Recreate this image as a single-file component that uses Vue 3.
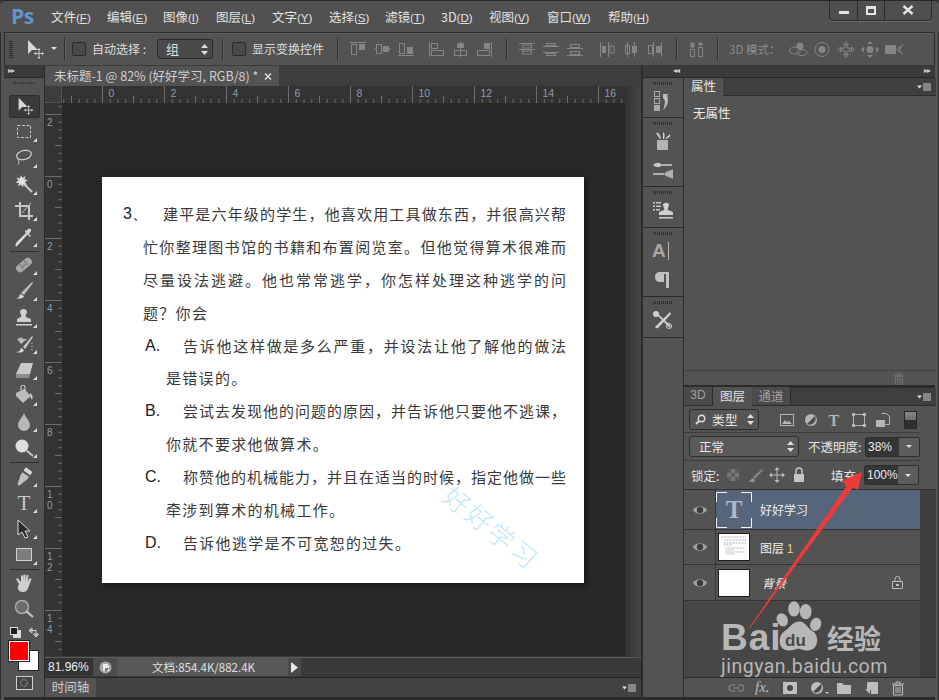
<script setup>
const menus = [
  ['文件', 'F', 51, 39], ['编辑', 'E', 107, 39], ['图像', 'I', 163, 36], ['图层', 'L', 216, 39],
  ['文字', 'Y', 272, 40], ['选择', 'S', 329, 39], ['滤镜', 'T', 385, 39], ['3D', 'D', 441, 31],
  ['视图', 'V', 489, 41], ['窗口', 'W', 547, 44], ['帮助', 'H', 608, 42]
]
const s = 'fill="none" stroke="#858585" stroke-width="1"'
const f = 'fill="#858585"'
const alignIcons = [
  [`<path d="M1 1.5h16" ${s}/><rect x="2.5" y="3.5" width="5" height="10" ${s}/><rect x="10" y="3" width="6" height="6" ${f}/>`,
   `<path d="M1 8h3M9 8h2M16 8h2" ${s}/><rect x="3.5" y="3.5" width="5" height="9" ${s}/><rect x="10" y="5" width="6" height="6" ${f}/>`,
   `<path d="M1 14.5h16" ${s}/><rect x="2.5" y="2.5" width="5" height="10" ${s}/><rect x="10" y="6" width="6" height="7" ${f}/>`],
  [`<path d="M1.5 1v15" ${s}/><rect x="3.5" y="2.5" width="6" height="5" ${s}/><rect x="3.5" y="9.5" width="12" height="5" ${s}/>`,
   `<path d="M8.5 0v16" ${s}/><rect x="5" y="2" width="7" height="5" ${f}/><rect x="2.5" y="9.5" width="12" height="5" ${s}/>`,
   `<path d="M15.5 1v15" ${s}/><rect x="8" y="2" width="6" height="6" ${f}/><rect x="1.5" y="9.5" width="12" height="5" ${s}/>`]
]
const distIcons = [
  [`<path d="M1 2.5h16M1 8.5h16" ${s}/><rect x="4.5" y="4" width="9" height="3" ${s}/><rect x="4.5" y="10" width="9" height="3" ${s}/>`,
   `<path d="M1 5.5h16M1 11.5h16" ${s}/><rect x="4.5" y="2.5" width="9" height="2" ${s}/><rect x="4.5" y="12.5" width="9" height="2" ${s}/>`,
   `<path d="M1 7.5h16M1 14.5h16" ${s}/><rect x="4.5" y="3.5" width="9" height="3" ${s}/><rect x="4.5" y="10.5" width="9" height="3" ${s}/>`],
  [`<path d="M2.5 1v15M10.5 1v15" ${s}/><rect x="4" y="5" width="4" height="7" ${f}/><rect x="12" y="5" width="4" height="7" ${s}/>`,
   `<path d="M5.5 1v15M12.5 1v15" ${s}/><rect x="3.5" y="4.5" width="4" height="8" ${s}/><rect x="10" y="5" width="5" height="7" ${f}/>`,
   `<path d="M7.5 1v15M15.5 1v15" ${s}/><rect x="2.5" y="4.5" width="4" height="8" ${s}/><rect x="10" y="5" width="5" height="7" ${f}/>`]
]
const autoAlign = `<rect x="2.5" y="1.5" width="4" height="5" ${f}/><rect x="2.5" y="8.5" width="4" height="7" ${s}/><rect x="10.5" y="1.5" width="4" height="3" ${f}/><rect x="10.5" y="6.5" width="4" height="9" ${s}/>`
const threeD = [
  `<ellipse cx="6" cy="9.500" rx="5.500" ry="3.500" ${s}/><ellipse cx="13" cy="11.500" rx="5" ry="3" ${s}/><circle cx="11" cy="5" r="3.500" ${f}/>`,
  `<circle cx="9" cy="8.500" r="7" ${s} stroke-width="2"/><circle cx="9" cy="8.500" r="3.500" ${f}/>`,
  `<path d="M9 .5l2.500 3h-5zM9 16.500l2.500-3h-5zM.5 8.500l3-2.500v5zM17.500 8.500l-3-2.500v5z" ${s}/><path d="M8 4h2v3h3v3h-3v3H8v-3H5V7h3z" ${s}/>`,
  `<path d="M9 0l3 3H6zM9 17l3-3H6zM0 8.500l3-3v6zM18 8.500l-3-3v6z" ${f}/><circle cx="9" cy="8.500" r="3.500" ${f}/>`,
  `<rect x="0" y="4" width="11" height="9" rx="1" ${f}/><path d="M12 8.500l3-3v6zM18 3l-4 5.500 4 5.500" ${s}/>`
]
const w = '#c6c6c6'
const l = `fill="none" stroke="${w}"`
const moveIcon = `<path d="M4 2v14l4-4h6z" fill="#d8d8d8"/><path d="M15 11v9M10.500 15.500h9" ${l}/><path d="M15 10l1.500 2h-3zM15 21l1.500-2h-3zM10 15.500l2-1.500v3zM20 15.500l-2-1.500v3z" fill="#d8d8d8"/>`
const tools = [
  [{ i: moveIcon, sel: 1 },
   { i: `<rect x="4.500" y="4.500" width="13" height="12" ${l} stroke-dasharray="3 1.500"/>`, m: 1 },
   { i: `<ellipse cx="11" cy="8" rx="7.500" ry="4.500" ${l} stroke-width="1.300" transform="rotate(-15 11 8)"/><path d="M5 11c-1 2 1 2 1 4s-1 2-1 3" ${l}/>`, m: 1 },
   { i: `<path d="M11 11l8 8" stroke="${w}" stroke-width="2.200"/><path d="M8 2l1.500 3 3-2-1 3.500 3.500.500-3 2 2 3-3.500-1-.500 3.500-2-3-3 2 1-3.500-3.500-.500 3-2-2-3 3.500 1z" fill="#e0e0e0"/>`, m: 1 },
   { i: `<path d="M7 2v14h13M2 6h14v14" fill="none" stroke="${w}" stroke-width="2"/><path d="M9 13l9-10" stroke="${w}"/>`, m: 1 },
   { i: `<path d="M14 8L5 18l-1.500 1.500L3 19l1-2 9-9z" fill="none" stroke="#ddd" stroke-width="1.300"/><path d="M12 6l5 5 1-1-2-2 2-3c1-2-1-3.500-3-2l-2 2-1-1z" fill="#d0d0d0"/>`, m: 1 }],
  [{ i: `<g transform="rotate(-40 11 11)"><rect x="2" y="7" width="18" height="8" rx="4" fill="#a8a8a8"/><path d="M8 8v6M14 8v6M9 11h4" stroke="#6c6c6c" stroke-width="2" stroke-dasharray="1 1"/></g>`, m: 1 },
   { i: `<path d="M8 13L19 2l1 1-9 12z" fill="#bdbdbd"/><path d="M3 18c3 0 3-1 4-4l4 2c-1 3-5 3-8 2z" fill="#d8d8d8"/>`, m: 1 },
   { i: `<path d="M8 11c1-2-1-3-1-5 0-4 7-4 7 0 0 2-2 3-1 5 1 1 5 1 5 3v2H4v-2c0-2 3-2 4-3z" fill="#d0d0d0"/><path d="M3 18h16v1.500H3z" fill="#d0d0d0"/>`, m: 1 },
   { i: `<path d="M4 6l6-2-1 2h5l-6 5z" fill="#bdbdbd"/><path d="M10 14L19 3l1 1-8 12z" fill="#c8c8c8"/><path d="M3 19c3 0 4-1 5-4l3 2c-1 3-5 3-8 2z" fill="#d8d8d8"/><path d="M19 10v8" stroke="#ddd" stroke-dasharray="1 2"/>`, m: 1 },
   { i: `<path d="M8 4h12l-3 11H3z" fill="#c8c8c8"/><path d="M3 15h14l-1 4H3z" fill="#8d8d8d"/>`, m: 1 },
   { i: `<path d="M3 8l8-4 7 7-8 7-7-7z" fill="#bcbcbc"/><path d="M8 5V2a2 2 0 0 1 4 0v4" fill="none" stroke="#ddd"/><path d="M17 8c3 2 3 5 2 7-1-2-2-3-2-7z" fill="#ccc"/>`, m: 1 },
   { i: `<path d="M11 2c2 5 6 8 6 12a6 6 0 0 1-12 0c0-4 4-7 6-12z" fill="#b8b8b8"/>`, m: 1 },
   { i: `<circle cx="9" cy="9" r="6.500" fill="#dedede"/><path d="M13 13l7 6" stroke="${w}" stroke-width="2"/>`, m: 1 }],
  [{ i: `<g transform="rotate(35 11 11)"><path d="M7 8h8v3l-3 10h-2L7 11z" fill="#c0c0c0"/><rect x="7" y="2" width="8" height="4" fill="#d8d8d8"/></g>`, m: 1 },
   { t: 'T', m: 1 },
   { i: `<path d="M5 2v15l4-3 3 6 3-1-3-6h5z" fill="#2a2a2a" stroke="#d8d8d8"/>`, m: 1 },
   { i: `<rect x="3.500" y="4.500" width="15" height="12" fill="#7d7d7d" stroke="#d0d0d0"/>`, m: 1 }],
  [{ i: `<path d="M6 12L3 7l1.500-1L8 10V3.500h2V9l.5-6.500h2V9l1-6h2l-1 7 2-4 2 1-3 8c-1 4-3 5-6 5s-4-2-5-4z" fill="#cfcfcf"/>` },
   { i: `<circle cx="9" cy="9" r="6.500" fill="#6c6c6c" stroke="#aaa" stroke-width="1.500"/><path d="M13 13l7 6" stroke="${w}" stroke-width="2.200"/>` }]
]
const dock = [
  { h: 40, ic: [`<rect x="3.500" y="1.500" width="5" height="5" fill="none" stroke="#aaa"/><rect x="3.500" y="8.500" width="5" height="5" fill="none" stroke="#aaa"/><rect x="3" y="15" width="6" height="6" fill="#aaa"/><path d="M12 4h6l-2 1c2 5 1 11-4 15 2-5 3-10 0-12z" fill="#bbb"/>`] },
  { h: 69, ic: [`<path d="M6 10h11v10H6z" fill="#b4b4b4"/><path d="M9 9L5 3c2-1 4 1 5 6zM12 9V2c2 1 2 4 1 7zM14 9l5-5c1 2-1 4-4 5z" fill="#cfcfcf"/>`,
   `<path d="M2 6c3-3 7-3 9 0-2 3-6 3-9 0z" fill="#c4c4c4"/><path d="M11 6h10" stroke="#ccc" stroke-width="1.500"/><path d="M2 15h11" stroke="#ccc" stroke-width="1.500"/><path d="M13 15c3-4 7-3 9-5v10c-2-2-6-1-9-5z" fill="#b0b0b0"/>`] },
  { h: 41, ic: [`<path d="M2 3h2v1.500H2zm3 0h5v1.500H5zM2 6.500h2V8H2zm3 0h5V8H5zM2 10h2v1.500H2zm3 0h4v1.500H5z" fill="#c8c8c8"/><path d="M13 11c1-2-1-3-1-5 0-3 6-3 6 0 0 2-2 3-1 5 1 1 5 1 5 3v2H8v-2c0-2 4-2 5-3z" fill="#cfcfcf"/><path d="M8 18h14v1.500H8z" fill="#cfcfcf"/>`] },
  { h: 69, ic: [`<text x="1" y="17" font-family="Liberation Sans" font-size="19" font-weight="bold" fill="#a8a8a8">A</text><path d="M17.500 2v18" stroke="#b8b8b8"/>`,
   `<path d="M9 3h9v16h-3V5h-2v8H9.500C6 13 4 11 4 8s2-5 5-5z" fill="#c0c0c0"/>`] },
  { h: 41, ic: [`<path d="M3 3l15 15 2 1-1-3L5 3zM19 3L4 18c1 1.500 2 1.500 3 1L20 5z" fill="#cfcfcf"/><circle cx="5" cy="5" r="3" fill="#cfcfcf"/><circle cx="18" cy="17" r="2.500" fill="none" stroke="#cfcfcf"/>`] }
]
const menuIcon = `<path d="M0 2.500h5L2.500 5.500z" fill="#ddd"/><path d="M6 1h8M6 3h8M6 5h8M6 7h8" stroke="#ccc" stroke-width="1"/>`
const filterIcons = [
  `<rect x="1.500" y="2.500" width="13" height="11" fill="none" stroke="#b5b5b5"/><path d="M3 12l3-4 2 2 2-1 3 3z" fill="#b5b5b5"/>`,
  `<circle cx="8" cy="8" r="6" fill="#b5b5b5"/><path d="M12 4a6 6 0 0 1-8 8z" fill="#4a4a4a"/>`,
  `<text x="1.500" y="14" font-family="Liberation Serif" font-weight="bold" font-size="16" fill="#b5b5b5">T</text>`,
  `<rect x="2.500" y="2.500" width="11" height="11" fill="none" stroke="#b5b5b5"/><path d="M1 1h3v3H1zM12 1h3v3h-3zM1 12h3v3H1zM12 12h3v3h-3z" fill="#b5b5b5"/>`,
  `<path d="M6.500 1.500h5l3 3v8h-4" fill="none" stroke="#b5b5b5"/><rect x="1" y="8" width="9" height="7" fill="#b5b5b5"/>`
]
const lockIcons = [
  `<path d="M2 2h12v12H2z" fill="#777"/><path d="M2 2h4v4H2zM10 2h4v4h-4zM6 6h4v4H6zM2 10h4v4H2zM10 10h4v4h-4z" fill="#5c5c5c"/>`,
  `<path d="M6 10L15 2l1 1-8 9z" fill="#858585"/><path d="M1 14c3 0 3-1 4-3l3 2c-1 3-4 2-7 1z" fill="#9a9a9a"/>`,
  `<path d="M8 1v14M1 8h14" stroke="#bbb"/><path d="M8 0l2.500 3h-5zM8 16l2.500-3h-5zM0 8l3-2.500v5zM16 8l-3-2.500v5z" fill="#bbb"/>`,
  `<rect x="3" y="7" width="10" height="8" fill="#c4c4c4"/><path d="M5 7V4a3 3 0 0 1 6 0v3" fill="none" stroke="#c4c4c4" stroke-width="1.500"/>`
]
const trash = `<path d="M2 4h12M6 4V2h4v2M3.500 5.500h9V15h-9zM6 7v6M8 7v6M10 7v6" fill="none" stroke="#bdbdbd"/>`
const trashDim = trash.replace('#bdbdbd', '#777')
const bottomIcons = [
  { i: `<path d="M7 5H4a3 3 0 0 0 0 6h3M10 5h3a3 3 0 0 1 0 6h-3M5 8h7" fill="none" stroke="#7c7c7c" stroke-width="1.500"/>` },
  { fx: 1 },
  { i: `<rect x="1" y="2" width="14" height="12" fill="#bdbdbd"/><circle cx="8" cy="8" r="3" fill="#4a4a4a"/>` },
  { i: `<circle cx="8" cy="8" r="6" fill="#bdbdbd"/><path d="M12 4a6 6 0 0 1-8 8z" fill="#4a4a4a"/>`, m: 1 },
  { i: `<path d="M1 3h5l2 2h7v9H1z" fill="#bdbdbd"/>` },
  { i: `<path d="M5 2h10v12H8v-4H4V3z" fill="#bdbdbd"/><path d="M2 9h5v5z" fill="#bdbdbd"/>` },
  { i: trash }
]
const eye = `<path d="M1 7c3-5 11-5 14 0-3 5-11 5-14 0z" fill="#a4a4a4"/><circle cx="8" cy="7" r="3.200" fill="#3e3e3e"/>`

const hTicks = []
for (let i = -5; i * 7.75 + 40 < 563; i++) hTicks.push({ x: 40.5 + i * 7.75, k: ((i % 8) + 8) % 8 })
const hLabels = [0, 2, 4, 6, 8, 10, 12, 14, 16]
const vTicks = []
for (let i = -9; i * 7.75 + 74 < 553; i++) vTicks.push({ y: 73.5 + i * 7.75, k: ((i % 8) + 8) % 8 })
const vLabels = [['2', -2], ['0', 0], ['2', 2], ['4', 4], ['6', 6], ['8', 8], ['1', 10, '0'], ['1', 12, '2'], ['1', 14, '4']]
const tk = k => (k === 0 ? 17 : k === 4 ? 7 : 4)

const lines = [
  { m: '3、', mw: 40, ind: 21, t: '建平是六年级的学生，他喜欢用工具做东西，并很高兴帮', j: 1 },
  { ind: 41, t: '忙你整理图书馆的书籍和布置阅览室。但他觉得算术很难而', j: 1 },
  { ind: 41, t: '尽量设法逃避。他也常常逃学，你怎样处理这种逃学的问', j: 1 },
  { ind: 41, t: '题？你会' },
  { m: 'A.', mw: 38, ind: 43, t: '告诉他这样做是多么严重，并设法让他了解他的做法', j: 1 },
  { ind: 64, t: '是错误的。' },
  { m: 'B.', mw: 38, ind: 43, t: '尝试去发现他的问题的原因，并告诉他只要他不逃课，', j: 1 },
  { ind: 64, t: '你就不要求他做算术。' },
  { m: 'C.', mw: 38, ind: 43, t: '称赞他的机械能力，并且在适当的时候，指定他做一些', j: 1 },
  { ind: 64, t: '牵涉到算术的机械工作。' },
  { m: 'D.', mw: 38, ind: 43, t: '告诉他逃学是不可宽恕的过失。' }
]
</script>

<template>
  <div class="win">
    <header class="title">
      <span class="logo">Ps</span>
      <nav class="menu">
        <span v-for="m in menus" :key="m[1]" class="mi" :style="{ width: m[3] + 'px', left: m[2] + 'px' }">{{ m[0] }}<small>(<u>{{ m[1] }}</u>)</small></span>
      </nav>
      <div class="wc">
        <span class="wb w1"><i class="min"></i></span>
        <span class="wb w2"><i class="max"></i></span>
        <span class="wb w3"><svg width="12" height="10" viewBox="0 0 12 10"><path d="M1.500 1l9 8M10.500 1l-9 8" stroke="#e4e4e4" stroke-width="2.400"/></svg></span>
      </div>
    </header>

    <section class="opts">
      <i class="grip"></i>
      <svg class="mv" width="22" height="22" viewBox="0 0 22 22" v-html="moveIcon"></svg>
      <i class="caret"></i>
      <i class="sep s1"></i>
      <i class="chk c1"></i>
      <span class="olab l1">自动选择 :</span>
      <span class="osel">组<svg width="7" height="11" viewBox="0 0 7 11"><path d="M3.500 0L7 4H0zM3.500 11L0 7h7z" fill="#ddd"/></svg></span>
      <i class="sep s2"></i>
      <i class="chk c2"></i>
      <span class="olab">显示变换控件</span>
      <i class="sep s3"></i>
      <svg v-for="(ic, n) in alignIcons[0]" :key="'a' + n" class="oi" :class="{ first: n === 0 }" width="24" height="16" viewBox="-3 0 24 16" v-html="ic"></svg>
      <svg v-for="(ic, n) in alignIcons[1]" :key="'b' + n" class="oi" :class="{ g7: n === 0 }" width="24" height="16" viewBox="-3 0 24 16" v-html="ic"></svg>
      <i class="sep s4"></i>
      <svg v-for="(ic, n) in distIcons[0]" :key="'c' + n" class="oi" :class="{ g8: n === 0 }" width="24" height="16" viewBox="-3 0 24 16" v-html="ic"></svg>
      <svg v-for="(ic, n) in distIcons[1]" :key="'d' + n" class="oi" :class="{ g8: n === 0 }" width="24" height="16" viewBox="-3 0 24 16" v-html="ic"></svg>
      <i class="sep s5"></i>
      <svg class="oi g8" width="24" height="16" viewBox="-3 0 24 16" v-html="autoAlign"></svg>
      <i class="sep s5b"></i>
      <span class="o3d">3D 模式：</span>
      <svg v-for="(ic, n) in threeD" :key="'e' + n" class="oi" width="24" height="17" viewBox="-3 0 24 17" v-html="ic"></svg>
    </section>

    <main class="body">
      <aside class="toolbox">
        <div class="strip"><span class="dbl">▸▸</span></div>
        <div class="tlist">
          <i class="tgrip"></i>
          <template v-for="(grp, gi) in tools" :key="gi">
            <i v-if="gi" class="tsep"></i>
            <div v-for="(t, ti) in grp" :key="ti" class="tool" :class="{ sel: t.sel, more: t.m }">
              <span v-if="t.t" class="tT">T</span>
              <svg v-else width="22" height="22" viewBox="0 0 22 22" v-html="t.i"></svg>
            </div>
          </template>
          <div class="swatch">
            <div class="swaps">
              <svg width="11" height="11" viewBox="0 0 11 11"><rect x="3" y="3" width="8" height="8" fill="#dcdcdc"/><rect x="0.500" y="0.500" width="7" height="7" fill="#1e1e1e" stroke="#ddd"/></svg>
              <svg width="11" height="12" viewBox="0 0 11 12"><path d="M1 3.500h7v6M1 3.500l3-2.500v5zM8 10l-2.500-3h5z" fill="none" stroke="#dcdcdc"/></svg>
            </div>
            <div class="colors"><i class="bgc"></i><i class="fgc"></i></div>
            <div class="qm"><svg width="16" height="12" viewBox="0 0 16 12"><circle cx="8" cy="6" r="4.500" fill="none" stroke="#e8e8e8" stroke-dasharray="1 1"/></svg></div>
          </div>
        </div>
      </aside>

      <section class="doc">
        <div class="tabs"><div class="tab">未标题-1 @ 82% (好好学习, RGB/8) *<svg width="8" height="7" viewBox="0 0 8 7"><path d="M1 .5l6 6M7 .5l-6 6" stroke="#d4d4d4" stroke-width="1.600"/></svg></div></div>
        <div class="work">
          <div class="rulers">
            <div class="corner"></div>
            <svg class="hr" width="563" height="17">
              <path v-for="(t, i) in hTicks" :key="i" :d="`M${t.x} 17v-${tk(t.k)}`" stroke="#6c6c6c"/>
              <text v-for="n in hLabels" :key="n" :x="46.500 + n * 31" y="11" class="rl">{{ n }}</text>
            </svg>
            <svg class="vr" width="17" height="553">
              <path v-for="(t, i) in vTicks" :key="i" :d="`M${17 - tk(t.k)} ${t.y}h${tk(t.k)}`" stroke="#6c6c6c"/>
              <template v-for="v in vLabels" :key="v[1]">
                <text x="2" :y="v[1] * 31 + 84.500" class="rl rv">{{ v[0] }}</text>
                <text v-if="v[2]" x="2" :y="v[1] * 31 + 96" class="rl rv">{{ v[2] }}</text>
              </template>
            </svg>
            <div class="canvas">
              <article class="page">
                <div v-for="(ln, i) in lines" :key="i" class="ln" :style="{ paddingLeft: ln.ind + 'px' }">
                  <span v-if="ln.m" class="mk" :style="{ width: ln.mw + 'px' }">{{ ln.m }}</span>
                  <span class="tx" :class="{ just: ln.j }">{{ ln.t }}</span>
                </div>
                <span class="wm">好好学习</span>
              </article>
            </div>
          </div>
          <div class="vscroll"></div>
        </div>
        <div class="status">
          <span class="zoom">81.96%</span>
          <span class="st-ic"><svg width="13" height="13" viewBox="0 0 13 13"><circle cx="6.500" cy="6.500" r="6" fill="#a8a8a8"/><path d="M4 3h4l2 2v5H4z" fill="#eee"/><path d="M6 7h4l-2 3H6z" fill="#777"/></svg></span>
          <span class="st-info">文档:854.4K/882.4K</span>
          <span class="st-arrow"><svg width="7" height="11" viewBox="0 0 7 11"><path d="M0 0l7 5.500L0 11z" fill="#e8e8e8"/></svg></span>
          <span class="st-rest"></span>
        </div>
        <div class="timeline">
          <span class="tltab">时间轴</span>
          <svg class="pm" width="15" height="8" viewBox="0 0 15 8" v-html="menuIcon"></svg>
        </div>
      </section>

      <aside class="dock">
        <div class="strip dstrip"><span class="dbl">◂◂</span><span class="dbl dr">▸▸</span></div>
        <div v-for="(g, gi) in dock" :key="gi" class="dgroup" :style="{ height: g.h + 'px' }">
          <i class="dgrip"></i>
          <svg v-for="(ic, n) in g.ic" :key="n" class="dic" width="24" height="22" viewBox="0 0 24 22" v-html="ic"></svg>
        </div>
        <div class="dgroup fill"></div>
      </aside>

      <aside class="panels">
        <div class="pnl props">
          <div class="ptabs">
            <span class="ptab on">属性</span>
            <svg class="pm" width="15" height="8" viewBox="0 0 15 8" v-html="menuIcon"></svg>
          </div>
          <div class="nop">无属性</div>
          <div class="pfoot"><svg width="14" height="13" viewBox="0 0 16 16" v-html="trashDim"></svg></div>
        </div>
        <div class="pnl layers">
          <div class="ptabs ltabs">
            <span class="ptab off t3d">3D</span>
            <span class="ptab on">图层</span>
            <span class="ptab off">通道</span>
            <svg class="pm" width="15" height="8" viewBox="0 0 15 8" v-html="menuIcon"></svg>
          </div>
          <div class="row r1">
            <span class="sel s-filter">
              <svg width="11" height="11" viewBox="0 0 11 11"><circle cx="6.500" cy="4.500" r="3.200" fill="none" stroke="#ddd" stroke-width="1.400"/><path d="M4 7L1 10" stroke="#ddd" stroke-width="1.800"/></svg>
              <b>类型</b>
              <svg class="ud" width="7" height="11" viewBox="0 0 7 11"><path d="M3.500 0L7 4H0zM3.500 11L0 7h7z" fill="#ddd"/></svg>
            </span>
            <div class="ficons"><svg v-for="(ic, n) in filterIcons" :key="n" width="16" height="16" viewBox="0 0 16 16" v-html="ic"></svg></div>
            <span class="toggle"><i></i></span>
          </div>
          <div class="row r2">
            <span class="sel s-blend"><b>正常</b><svg class="ud" width="7" height="11" viewBox="0 0 7 11"><path d="M3.500 0L7 4H0zM3.500 11L0 7h7z" fill="#ddd"/></svg></span>
            <span class="lab op">不透明度:</span>
            <span class="field"><em>38%</em><i><u></u></i></span>
          </div>
          <div class="row r3">
            <span class="lab lk">锁定:</span>
            <div class="licons"><svg v-for="(ic, n) in lockIcons" :key="n" width="16" height="16" viewBox="0 0 16 16" v-html="ic"></svg></div>
            <span class="lab fl">填充:</span>
            <span class="field"><em>100%</em><i><u></u></i></span>
          </div>
          <div class="list">
            <div class="lrows">
              <div class="lr h40 cur">
                <span class="eye"><svg width="16" height="14" viewBox="0 0 16 14" v-html="eye"></svg></span>
                <span class="tt">
                  <svg class="corners" width="36" height="36" viewBox="0 0 36 36"><path d="M.5 10V.5H11M25 .5h10.500V10M.5 26v9.500H11M25 35.500h10.500V26" fill="none" stroke="#f2f2f2"/></svg>
                  <b>T</b>
                </span>
                <span class="nm">好好学习</span>
              </div>
              <div class="lr h35">
                <span class="eye"><svg width="16" height="14" viewBox="0 0 16 14" v-html="eye"></svg></span>
                <span class="thumb wt">
                  <svg width="30" height="26" viewBox="0 0 30 26"><path d="M3 3h24M5 6h22M5 9h22M5 11h8M6 14h20M7 16h8M6 18h20M7 20h9" stroke="#8a8a8a" stroke-width=".7" stroke-dasharray="1 .5"/></svg>
                </span>
                <span class="nm n2">图层 <span class="one">1</span></span>
              </div>
              <div class="lr h36">
                <span class="eye"><svg width="16" height="14" viewBox="0 0 16 14" v-html="eye"></svg></span>
                <span class="thumb wt"></span>
                <span class="nm it">背景</span>
                <svg class="lock" width="11" height="13" viewBox="0 0 11 13"><path d="M.5 5.500h10v7H.5zM3 5.500V3a2.500 2.500 0 0 1 5 0v2.500" fill="none" stroke="#bbb"/><rect x="4" y="8" width="3" height="2" fill="#bbb"/></svg>
              </div>
              <div class="lempty"></div>
            </div>
            <div class="lscroll"></div>
          </div>
          <div class="lfoot">
            <span v-for="(b, n) in bottomIcons" :key="n" class="fi" :class="{ m: b.m }">
              <span v-if="b.fx" class="fx">fx<s>.</s></span>
              <svg v-else width="16" height="16" viewBox="0 0 16 16" v-html="b.i"></svg>
            </span>
          </div>
        </div>
      </aside>
    </main>

    <svg class="arrow" width="939" height="700" viewBox="0 0 939 700"><path d="M749 628L846 487l-3-7 19-8-4 18-5-3-103 141z" fill="#ef3a3a"/></svg>
    <div class="baidu">
      <div class="bl1">
        <span class="bai">Bai</span>
        <span class="paw">
          <svg width="52" height="56" viewBox="0 0 52 56"><ellipse cx="21" cy="8" rx="6.500" ry="8.500"/><ellipse cx="34" cy="11" rx="6.500" ry="8.500"/><ellipse cx="8" cy="20" rx="6" ry="7.500" transform="rotate(-25 8 20)"/><ellipse cx="45" cy="25" rx="6" ry="7.500" transform="rotate(20 45 25)"/><path d="M27 22c7 0 9 8 15 11 7 4 7 21-6 21-5 0-7-2-10-2s-6 2-11 2C3 54 3 38 10 33c6-3 9-11 17-11z"/></svg>
          <b>du</b>
        </span>
        <span class="jy">经验</span>
      </div>
      <div class="bl2">jingyan.baidu.com</div>
    </div>
  </div>
</template>

<style>
html, body { margin: 0; background: #3a3a3a; }
</style>

<style scoped>
* { box-sizing: border-box; }
i { display: block; font-style: normal; }
.win { position: relative; width: 939px; height: 700px; overflow: hidden; background: #535353; border-top: 1px solid #24282c; border-radius: 5px 5px 0 0; font-family: "Noto Sans CJK SC", "Liberation Sans", sans-serif; color: #ddd; display: flex; flex-direction: column; box-shadow: inset 1px 0 #2d2d2d, inset -1px 0 #2d2d2d; }

.title { height: 31px; flex: none; position: relative; background: #515151; }
.logo { position: absolute; left: 11px; top: 0; font: bold 21px/30px "Open Sans", sans-serif; color: #5f96cc; letter-spacing: -.5px; }
.menu { display: block; }
.mi { position: absolute; top: 7px; font-size: 12.500px; line-height: 17px; color: #e2e2e2; white-space: nowrap; }
.mi small { font-size: 11.500px; font-family: "Liberation Sans", sans-serif; }
.wc { position: absolute; left: 829px; top: -1px; width: 103px; height: 21px; display: flex; background: #4e4e4e; border: 1px solid #2c2c2c; border-top: 0; border-radius: 0 0 4px 4px; box-shadow: 0 1px #6a6a6a; }
.wb { display: flex; align-items: center; justify-content: center; border-right: 1px solid #2c2c2c; }
.w1 { width: 28px; } .w2 { width: 27px; } .w3 { flex: 1; border: 0; }
.min { width: 10px; height: 3px; background: #e4e4e4; margin-top: 4px; }
.max { width: 10px; height: 9px; border: 2px solid #e4e4e4; border-top-width: 3px; }

.opts { height: 33px; flex: none; margin: 0 4px 0 4px; background: #535353; border: 1px solid #2c2c2c; border-bottom: 0; display: flex; align-items: center; box-shadow: inset 0 1px #5f5f5f; }
.grip { width: 4px; height: 17px; margin-left: 4px; background: repeating-linear-gradient(#2e2e2e 0 1px, transparent 1px 2px); }
.mv { margin-left: 11px; }
.caret { width: 0; height: 0; margin-left: 5px; margin-top: 2px; border: 3px solid transparent; border-top: 3px solid #ddd; }
.sep { width: 1px; height: 23px; background: #333; box-shadow: 1px 0 #5f5f5f; flex: none; }
.s1 { margin-left: 7px; }
.chk { width: 14px; height: 14px; background: #494949; border: 1px solid #2a2a2a; border-radius: 2px; flex: none; }
.c1 { margin-left: 7px; } .c2 { margin-left: 9px; }
.olab { font-size: 12px; color: #ddd; margin-left: 6px; line-height: 18px; white-space: nowrap; }
.l1 { width: 54px; flex: none; }
.osel { width: 56px; height: 20px; margin-left: 11px; flex: none; background: #4a4a4a; border: 1px solid #2a2a2a; border-radius: 3px; font-size: 13px; line-height: 18px; padding-left: 8px; display: flex; align-items: center; justify-content: space-between; padding-right: 4px; }
.s2 { margin-left: 9px; }
.s3 { margin-left: 13px; }
.oi { flex: none; }
.first { margin-left: 8px; }
.g7 { margin-left: 7px; }
.s4 { margin-left: 9px; }
.g8 { margin-left: 8px; }
.s5 { margin-left: 9px; }
.s5b { margin-left: 8px; }
.o3d { font-size: 11.500px; color: #8e8e8e; margin-left: 11px; width: 57px; flex: none; white-space: nowrap; }

.body { flex: 1; min-height: 0; display: flex; margin: 0 4px; padding-bottom: 3px; background: #2b2b2b; }
.strip { height: 13px; background: #3a3a3a; border-bottom: 1px solid #262626; flex: none; position: relative; }
.dbl { position: absolute; font-size: 8px; line-height: 12px; letter-spacing: -1px; color: #ccc; font-family: "DejaVu Sans", sans-serif; }

.toolbox { width: 40px; flex: none; display: flex; flex-direction: column; margin-right: 1px; }
.toolbox .dbl { left: 4px; }
.tlist { flex: 1; background: #535353; display: flex; flex-direction: column; align-items: center; }
.tgrip { width: 22px; height: 2px; margin: 4px 0 10px; flex: none; background: repeating-linear-gradient(90deg, #2e2e2e 0 1px, transparent 1px 2px); }
.tool { width: 31px; height: 26.200px; position: relative; flex: none; display: flex; align-items: center; justify-content: center; }
.tool.sel { height: 23px; margin-bottom: 1.500px; margin-top: .500px; background: #3a3a3a; border: 1px solid #2e2e2e; border-radius: 2px; }
.tool.more::after { content: ""; position: absolute; right: 3px; bottom: 3px; border-style: solid; border-width: 0 0 4px 4px; border-color: transparent transparent #e0e0e0 transparent; }
.tT { font: 21px/22px "Liberation Serif", serif; color: #c8c8c8; }
.tsep { width: 29px; height: 1px; background: #2f2f2f; flex: none; margin: 1px 0 0; }
.swatch { display: flex; flex-direction: column; align-items: center; margin-top: 1px; }
.swaps { width: 29px; display: flex; justify-content: space-between; margin-top: 3px; }
.swaps svg { flex: none; }
.colors { position: relative; width: 30px; height: 29px; margin-top: 2px; }
.fgc { position: absolute; left: 0; top: 0; width: 20px; height: 20px; background: #f00; border: 1px solid #fff; box-shadow: 0 0 0 1px #222; }
.bgc { position: absolute; left: 10px; top: 10px; width: 19px; height: 19px; background: #fff; box-shadow: 0 0 0 1px #222; }
.qm { width: 17px; height: 14px; margin-top: 6px; border: 1px solid #cfcfcf; display: flex; align-items: center; justify-content: center; background: #444; padding: 0; }
.qm svg { width: 12px; }

.doc { width: 596px; flex: none; display: flex; flex-direction: column; background: #3a3a3a; }
.tabs { height: 21px; flex: none; background: #3d3d3d; padding-top: 1px; }
.tab { width: 234px; height: 20px; background: #535353; font-size: 12.500px; line-height: 20px; padding-left: 9px; color: #cfcfcf; white-space: nowrap; position: relative; }
.tab svg { position: absolute; right: 7px; top: 7px; }
.work { flex: 1; min-height: 0; display: flex; }
.rulers { display: grid; grid-template-columns: 17px 563px; grid-template-rows: 17px 553px; flex: none; }
.corner { background: #3d3d3d; border-right: 1px dotted #666; border-bottom: 1px dotted #666; }
.hr, .vr { background: #333; display: block; }
.rl { font: 10.500px "Liberation Sans", sans-serif; fill: #8b9dad; }
.rv { font-size: 10px; }
.canvas { background: #282828; padding: 74px 0 0 40px; overflow: hidden; }
.page { position: relative; width: 482px; height: 406px; background: #fff; box-shadow: 2px 2px 6px rgba(0,0,0,.5); padding-top: 20px; color: #3a3a3a; font-size: 15px; line-height: 33px; }
.ln { display: flex; height: 32.900px; padding-right: 18px; white-space: nowrap; }
.mk { flex: none; font: 16px/33px "Liberation Sans", sans-serif; color: #222; }
.tx { flex: 1; letter-spacing: 1.300px; }
.tx.just { letter-spacing: 0; text-align: justify; text-align-last: justify; white-space: normal; }
.wm { position: absolute; left: 333px; top: 333px; font-size: 26px; line-height: 34px; letter-spacing: 2.500px; color: #c4e7fb; transform: rotate(39deg); white-space: nowrap; font-weight: 300; }
.vscroll { width: 16px; background: linear-gradient(90deg, #333, #454545); flex: none; }

.status { height: 19px; flex: none; display: flex; background: #3a3a3a; border-top: 1px solid #5b5b5b; }
.zoom { width: 48px; flex: none; padding-left: 3px; font: 12px/18px "Liberation Sans", sans-serif; color: #e8f0f6; background: #333; }
.st-ic { width: 24px; flex: none; background: #4c4c4c; display: flex; align-items: center; justify-content: center; }
.st-info { width: 171px; flex: none; background: #585858; font-size: 11.500px; line-height: 18px; text-align: center; color: #e0e0e0; white-space: nowrap; padding-left: 2px; }
.st-arrow { width: 13px; flex: none; background: #4a4a4a; display: flex; align-items: center; justify-content: center; }
.st-rest { flex: 1; }
.timeline { height: 20px; flex: none; margin-top: 1px; background: #424242; display: flex; align-items: center; justify-content: space-between; border-top: 1px solid #262626; padding-right: 4px; }
.tltab { width: 51px; height: 19px; background: #535353; font-size: 12.500px; line-height: 18px; text-align: center; color: #cfcfcf; }
.pm { flex: none; }

.dock { width: 40px; margin-left: 2px; flex: none; display: flex; flex-direction: column; }
.dstrip { width: 292px; z-index: 1; }
.dstrip .dbl { left: 30px; top: 0; }
.dstrip .dr { left: 281px; }
.dgroup { background: #535353; border-bottom: 1px solid #2a2a2a; display: flex; flex-direction: column; align-items: center; padding-top: 4px; flex: none; }
.dgrip { width: 20px; height: 3px; flex: none; background: repeating-linear-gradient(90deg, #2e2e2e 0 1px, transparent 1px 2px); margin-bottom: 5px; }
.dic { flex: none; margin-bottom: 7px; }
.dgroup.fill { flex: 1; border: 0; }

.panels { width: 252px; margin-left: 1px; flex: none; display: flex; flex-direction: column; padding-top: 13px; }
.pnl { background: #535353; display: flex; flex-direction: column; }
.props { height: 307px; margin-bottom: 3px; }
.ptabs { height: 18px; flex: none; background: #3f3f3f; display: flex; align-items: flex-end; position: relative; border-bottom: 1px solid #2c2c2c; }
.ptabs .pm { position: absolute; right: 4px; top: 5px; }
.ptab { width: 39px; height: 18px; font-size: 12.500px; line-height: 17px; text-align: center; flex: none; }
.ptab.on { background: #535353; color: #e2e2e2; height: 19px; margin-bottom: -1px; }
.ptab.off { color: #a0a0a0; background: #4a4a4a; border-right: 1px solid #2c2c2c; }
.t3d { width: 29px; font-family: "Liberation Sans", sans-serif; font-size: 12px; }
.nop { height: 26px; margin-top: 4px; padding-left: 9px; font-size: 12.500px; line-height: 26px; color: #eaeaea; flex: none; }
.pfoot { margin-top: auto; height: 15px; display: flex; justify-content: flex-end; align-items: center; padding-right: 30px; border-top: 1px solid #434343; }

.layers { flex: 1; min-height: 0; }
.row { display: flex; align-items: center; flex: none; position: relative; width: 236px; }
.r1 { height: 26px; margin-top: 1px; border-bottom: 1px solid #3e3e3e; padding-left: 5px; }
.r2 { height: 28px; border-bottom: 1px solid #3e3e3e; padding-left: 5px; }
.r3 { height: 28px; padding-left: 7px; }
.sel { height: 21px; background: #5a5a5a; border: 1px solid #2c2c2c; border-radius: 3px; display: flex; align-items: center; padding: 0 4px 0 5px; flex: none; color: #e8e8e8; }
.sel b { font-weight: 400; font-size: 12.500px; }
.sel .ud { margin-left: auto; }
.s-filter { width: 70px; background: #555; }
.s-filter b { margin-left: 6px; letter-spacing: .5px; }
.s-blend { width: 110px; }
.s-blend b { margin-left: 4px; }
.ficons { display: flex; gap: 8px; margin-left: 20px; }
.toggle { width: 13px; height: 18px; margin-left: 13px; background: #2f2f2f; border: 1px solid #262626; display: block; }
.toggle i { height: 8px; background: linear-gradient(#888, #6c6c6c); }
.lab { font-size: 12.500px; color: #e6e6e6; white-space: nowrap; }
.op { margin-left: 9px; width: 57px; flex: none; }
.field { width: 55px; height: 20px; flex: none; display: flex; border: 1px solid #2e2e2e; border-radius: 2px; }
.field em { font: 12px/18px "Liberation Sans", sans-serif; width: 33px; flex: none; padding-left: 2px; background: #353535; color: #e8eef4; }
.field i { flex: 1; background: #5c5c5c; display: flex; align-items: center; justify-content: center; }
.field u { width: 0; height: 0; border: 3.500px solid transparent; border-top: 3.500px solid #e0e0e0; border-bottom: 0; }
.lk { width: 32px; flex: none; }
.licons { display: flex; gap: 6px; margin-left: 2px; width: 106px; flex: none; }
.fl { width: 33px; flex: none; }
.list { flex: 1; min-height: 0; display: flex; border-top: 1px solid #303030; }
.lrows { width: 236px; flex: none; display: flex; flex-direction: column; }
.lscroll { flex: 1; background: #3e3e3e; }
.lr { display: flex; align-items: center; flex: none; border-bottom: 1px solid #343434; position: relative; color: #eee; }
.h40 { height: 40px; } .h35 { height: 35px; } .h36 { height: 36px; }
.eye { width: 32px; height: 100%; flex: none; border-right: 1px solid #383838; display: flex; align-items: center; justify-content: center; background: #535353; }
.thumb { flex: none; display: flex; align-items: center; justify-content: center; margin-left: 2px; }
.wt { width: 32px; height: 28px; background: #fff; border: 1px solid #1d1d1d; }
.tt { width: 36px; height: 36px; flex: none; position: relative; display: flex; align-items: center; justify-content: center; }
.corners { position: absolute; left: 0; top: 0; }
.tt b { font: 700 25px/30px "Liberation Serif", serif; color: #b2b8bf; }
.cur { background: #56657a; align-self: stretch; }
.nm { margin-left: 8px; font-size: 12px; color: #f0f0f0; white-space: nowrap; }
.n2 { margin-left: 10px; }
.one { color: #e9c98a; font-family: "Liberation Sans", sans-serif; }
.it { font-style: italic; margin-left: 12px; }
.lock { position: absolute; left: 208px; top: 11px; }
.lempty { flex: 1; background: #474747; }
.lfoot { height: 20px; flex: none; background: #535353; border-top: 1px solid #2c2c2c; display: flex; align-items: center; padding-left: 44px; gap: 11px; }
.fi { width: 16px; height: 16px; display: block; position: relative; flex: none; }
.fi.m::after { content: ""; position: absolute; right: -4px; bottom: 0; border: 2px solid transparent; border-top: 2px solid #ccc; }
.fi svg { display: block; }
.fx { display: block; font: italic 15px/15px "Liberation Serif", serif; color: #bdbdbd; white-space: nowrap; }
.fx s { text-decoration: none; color: #ccc; }

.arrow { position: absolute; left: 0; top: -1px; pointer-events: none; }
.baidu { position: absolute; left: 721px; top: 602px; width: 170px; color: #b7b7b7; pointer-events: none; }
.bl1 { display: flex; align-items: flex-end; height: 50px; }
.bai { font: 700 37px/30px "Liberation Sans", sans-serif; letter-spacing: 1px; width: 62px; flex: none; color: #b7b7b7; }
.paw { position: relative; width: 45px; height: 50px; flex: none; margin-left: -8px; }
.paw svg { position: absolute; left: 0; top: -2px; fill: #b7b7b7; width: 47px; height: 52px; }
.paw b { position: absolute; left: 10px; top: 29px; font: 700 17px/18px "Liberation Sans", sans-serif; color: #4a4a4a; }
.jy { font-size: 27px; line-height: 30px; font-weight: 700; flex: none; margin-left: 7px; }
.bl2 { font: 400 19.500px/26px "Roboto", sans-serif; letter-spacing: .5px; white-space: nowrap; margin-top: 1px; }
</style>
